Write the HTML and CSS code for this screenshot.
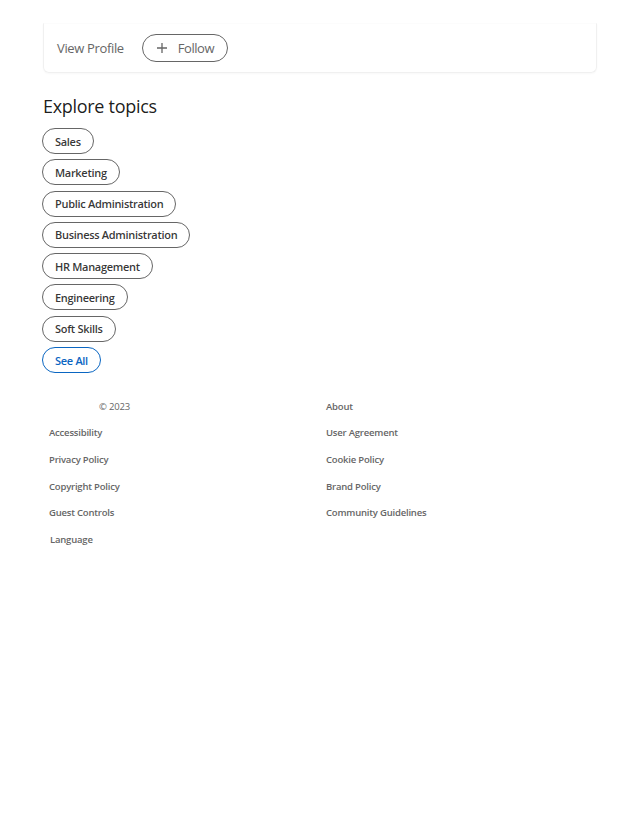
FILE: index.html
```html
<!DOCTYPE html>
<html lang="en">
<head>
<meta charset="utf-8">
<title>Explore topics</title>
<link rel="stylesheet" href="styles.css">
</head>
<body>
<div class="page">
  <div class="card">
    <a class="view-profile">View Profile</a>
    <button class="follow">
      <svg class="plus" viewBox="0 0 10 10" width="10" height="10" aria-hidden="true"><path d="M5 0v10M0 5h10" stroke="currentColor" stroke-width="1.3" fill="none"/></svg>
      <span>Follow</span>
    </button>
  </div>

  <h2 class="heading">Explore topics</h2>
  <div class="topics">
    <a class="pill">Sales</a>
    <a class="pill">Marketing</a>
    <a class="pill">Public Administration</a>
    <a class="pill">Business Administration</a>
    <a class="pill">HR Management</a>
    <a class="pill">Engineering</a>
    <a class="pill">Soft Skills</a>
    <a class="pill pill-blue">See All</a>
  </div>

  <ul class="footer">
    <li class="copy"><span class="logo-space"></span>© 2023</li>
    <li>About</li>
    <li>Accessibility</li>
    <li>User Agreement</li>
    <li>Privacy Policy</li>
    <li>Cookie Policy</li>
    <li>Copyright Policy</li>
    <li>Brand Policy</li>
    <li>Guest Controls</li>
    <li>Community Guidelines</li>
    <li class="lang">Language</li>
  </ul>
</div>
</body>
</html>
```

FILE: styles.css
```css
* { box-sizing: border-box; }
html, body { margin: 0; padding: 0; background: #fff; }
body {
  font-family: "Open Sans", "Noto Sans", Arial, sans-serif;
  color: rgba(0,0,0,0.9);
}
.page {
  padding: 23px 41px 0 43px;
}
.card {
  display: flex;
  align-items: center;
  height: 50px;
  padding: 0 13px;
  gap: 18px;
  border-radius: 0 0 6px 6px;
  border: 1px solid #f0f0f0;
  border-top-color: #fcfcfc;
  box-shadow: 0 1px 2px rgba(0,0,0,0.03);
}
.view-profile {
  font-size: 13px;
  font-weight: 500;
  letter-spacing: -0.35px;
  color: #666;
}
.follow {
  display: flex;
  align-items: center;
  gap: 11px;
  height: 28px;
  padding: 0 13px 0 14px;
  border: 1px solid #666;
  border-radius: 14px;
  background: #fff;
  color: #666;
  font-family: inherit;
  font-size: 13px;
  font-weight: 500;
  letter-spacing: -0.45px;
}
.plus { width: 10px; height: 10px; }
.heading {
  margin: 21px 0 10px;
  font-size: 18px;
  font-weight: 400;
  line-height: 24px;
  letter-spacing: -0.3px;
  color: rgba(0,0,0,0.9);
}
.topics {
  display: flex;
  flex-direction: column;
  align-items: flex-start;
  gap: 5.3px;
}
.pill {
  display: inline-flex;
  align-items: center;
  height: 26px;
  padding: 0 12px;
  margin-left: -1px;
  border: 1px solid #666;
  border-radius: 13px;
  font-size: 11px;
  font-weight: 600;
  letter-spacing: -0.3px;
  color: rgba(0,0,0,0.8);
}
.pill-blue {
  border-color: #0a66c2;
  color: #0a66c2;
}
.footer {
  list-style: none;
  margin: 20px 0 0;
  padding: 0 0 0 6px;
  display: grid;
  grid-template-columns: 277px 1fr;
  grid-auto-rows: 26.6px;
  font-size: 9.5px;
  font-weight: 600;
  letter-spacing: -0.2px;
  color: #666;
}
.footer li {
  display: flex;
  align-items: center;
}
.footer .copy { font-weight: 400; }
.logo-space { display: inline-block; width: 50px; }
.footer .lang { padding-left: 1px; }
```
